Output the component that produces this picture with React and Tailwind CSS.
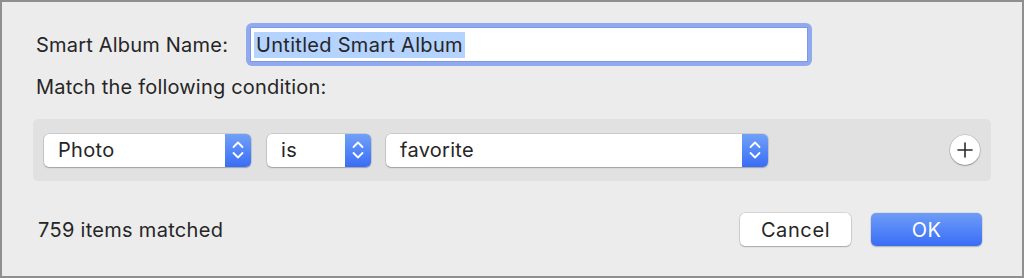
import { Plus } from 'lucide-react'

const font = { fontFamily: 'Inter, "Liberation Sans", sans-serif' }

function Stepper() {
  return (
    <div className="w-[26px] h-full flex items-center justify-center rounded-r-[5px] bg-gradient-to-b from-[#72a0f7] to-[#3a6cf6]">
      <svg width="14" height="26" viewBox="0 0 14 26" fill="none">
        <path d="M2.5 10 L7 5.5 L11.5 10" stroke="white" strokeWidth="1.8" strokeLinecap="round" strokeLinejoin="round" />
        <path d="M2.5 16 L7 20.5 L11.5 16" stroke="white" strokeWidth="1.8" strokeLinecap="round" strokeLinejoin="round" />
      </svg>
    </div>
  )
}

function PopUp({ label, width }) {
  return (
    <div className={`${width} h-[33px] flex items-stretch rounded-[5px] bg-white shadow-[0_0_0_0.5px_rgba(0,0,0,0.18),0_1px_1.5px_rgba(0,0,0,0.22)]`}>
      <span className="flex-1 flex items-center pl-[14px] text-[20px] tracking-[0.3px] text-[#262626]">{label}</span>
      <Stepper />
    </div>
  )
}

export default function App() {
  return (
    <div
      className="w-[1024px] h-[278px] border-2 border-[#8f8f8f] bg-[#ececec] px-[31px] pt-[21px] text-[#262626] flex flex-col"
      style={font}
    >
      {/* Name row */}
      <div className="flex items-center h-[43px]">
        <label className="w-[213px] pl-[3px] text-[20px] tracking-[0.2px]">Smart Album Name:</label>
        <div className="w-[566px] h-[43px] rounded-[6px] bg-[#91a9ee] p-[4px]">
          <div className="h-full bg-white border border-[#7f98e4] flex items-center pl-[3px]">
            <span className="bg-[#b4d3ff] text-[20px] tracking-[0.3px] leading-[26px] px-[2px]">Untitled Smart Album</span>
          </div>
        </div>
      </div>

      <p className="mt-[10px] pl-[3px] text-[20px] tracking-[0.2px] leading-[22px]">Match the following condition:</p>

      {/* Condition panel */}
      <div className="mt-[21px] h-[62px] rounded-[5px] bg-[#e1e1e1] flex items-center pl-[11px] pr-[11px]">
        <PopUp label="Photo" width="w-[207px]" />
        <div className="w-[16px]" />
        <PopUp label="is" width="w-[104px]" />
        <div className="w-[15px]" />
        <PopUp label="favorite" width="w-[382px]" />
        <button className="ml-auto w-[30px] h-[30px] rounded-full bg-white shadow-[0_0_0_0.5px_rgba(0,0,0,0.2),0_1px_1.5px_rgba(0,0,0,0.25)] flex items-center justify-center text-[#2a2a2a]">
          <Plus size={24} strokeWidth={1.6} absoluteStrokeWidth />
        </button>
      </div>

      {/* Footer */}
      <div className="mt-[32px] h-[33px] flex items-center pl-[5px] pr-[9px]">
        <span className="text-[20px] tracking-[0.3px]">759 items matched</span>
        <button className="ml-auto w-[111px] h-[33px] rounded-[5px] bg-white text-[20px] tracking-[0.6px] text-[#262626] shadow-[0_0_0_0.5px_rgba(0,0,0,0.18),0_1px_1.5px_rgba(0,0,0,0.22)]">
          Cancel
        </button>
        <button className="ml-[20px] w-[111px] h-[33px] rounded-[5px] bg-gradient-to-b from-[#6f9cf7] to-[#3a6cf6] text-[20px] tracking-[0.3px] text-white shadow-[0_0_0_0.5px_rgba(0,0,0,0.12),0_1px_1.5px_rgba(0,0,0,0.2)]">
          OK
        </button>
      </div>
    </div>
  )
}
